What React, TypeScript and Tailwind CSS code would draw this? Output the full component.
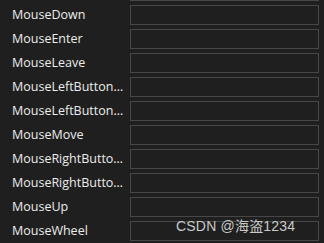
const events = [
  "MouseDoubleClick",
  "MouseDown",
  "MouseEnter",
  "MouseLeave",
  "MouseLeftButtonDown",
  "MouseLeftButtonUp",
  "MouseMove",
  "MouseRightButtonDown",
  "MouseRightButtonUp",
  "MouseUp",
  "MouseWheel",
];

export default function App() {
  return (
    <div className="relative w-[324px] h-[243px] overflow-hidden bg-[#1f1f1f] font-['Open_Sans','Noto_Sans',sans-serif]">
      <div className="-mt-[21px] flex flex-col">
        {events.map((name) => (
          <div key={name} className="flex h-6 items-center">
            <div className="w-[130px] shrink-0 truncate pl-3 pr-[4px] pt-[1px] text-[12.5px] text-[#ececec]">{name}</div>
            <div className="h-5 w-[189px] border border-[#474747] bg-[#1f1f1f]" />
          </div>
        ))}
      </div>
      {/* watermark */}
      <div className="absolute left-[176px] top-[216px] text-[14px] tracking-[0.2px] text-[#c9c9c9] font-['Liberation_Sans','Noto_Sans_CJK_SC',sans-serif]">
        CSDN @海盗1234
      </div>
    </div>
  );
}
